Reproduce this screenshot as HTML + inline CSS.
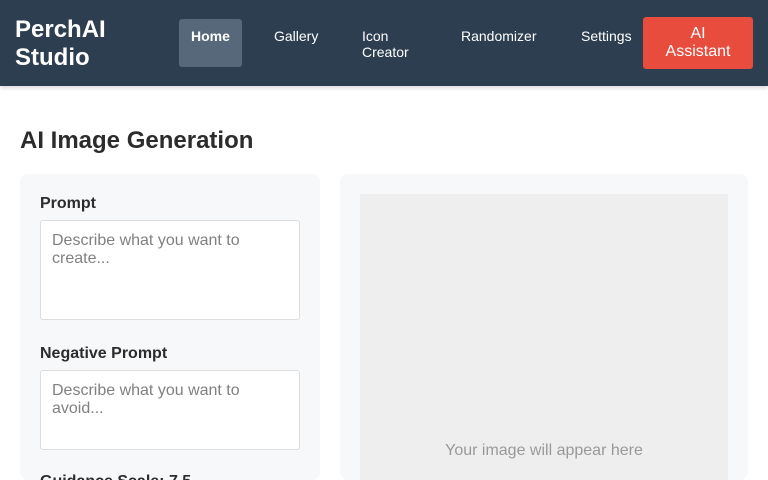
<!DOCTYPE html>
<html style="width:768px;height:480px;overflow:hidden"><head><style>
*{box-sizing:border-box;margin:0;padding:0}
body{width:768px;height:480px;overflow:hidden;background:#fff;font-family:"Liberation Sans",sans-serif;position:relative;color:#2c2c2c}
.hdr{position:absolute;left:0;top:0;width:768px;height:86px;background:#2c3e50;box-shadow:0 2px 4px rgba(0,0,0,.15)}
.logo{position:absolute;left:15px;top:16px;color:#fff;font-weight:bold;font-size:24px;line-height:28px}
.nav{position:absolute;color:#fff;font-size:14px;line-height:16px}
.home{left:179px;top:19px;width:63px;height:48px;background:#56687a;border-radius:3px;font-weight:bold;padding:9px 0 0 12px}
.ai{left:643px;top:17px;width:110px;height:52px;background:#e74c3c;border-radius:3px;text-align:center;font-size:16px;line-height:18px;padding-top:8px}
h1{position:absolute;left:20px;top:127px;font-size:24px;font-weight:bold;color:#2c2c2c}
.card{position:absolute;top:174px;background:#f7f8fa;border-radius:8px}
label{position:absolute;left:40px;font-weight:bold;font-size:16px}
.ta{position:absolute;left:40px;width:260px;background:#fff;border:1px solid #ddd;border-radius:3px;color:#808080;font-size:16px;line-height:18px;padding:11px 11px}
.img{position:absolute;left:360px;top:194px;width:368px;height:286px;background:#eee;color:#999;font-size:16px;text-align:center;padding-top:248px}
</style></head><body>
<div class="hdr">
<div class="logo">PerchAI<br>Studio</div>
<div class="nav home">Home</div>
<div class="nav" style="left:274px;top:28px">Gallery</div>
<div class="nav" style="left:362px;top:28px">Icon<br>Creator</div>
<div class="nav" style="left:461px;top:28px">Randomizer</div>
<div class="nav" style="left:581px;top:28px">Settings</div>
<div class="nav ai">AI<br>Assistant</div>
</div>
<h1>AI Image Generation</h1>
<div class="card" style="left:20px;width:300px;height:306px"></div>
<div class="card" style="left:340px;width:408px;height:306px"></div>
<label style="top:195px">Prompt</label>
<div class="ta" style="top:220px;height:100px">Describe what you want to create...</div>
<label style="top:345px">Negative Prompt</label>
<div class="ta" style="top:370px;height:80px">Describe what you want to avoid...</div>
<label style="top:473px">Guidance Scale: 7.5</label>
<div class="img">Your image will appear here</div>
</body></html>
